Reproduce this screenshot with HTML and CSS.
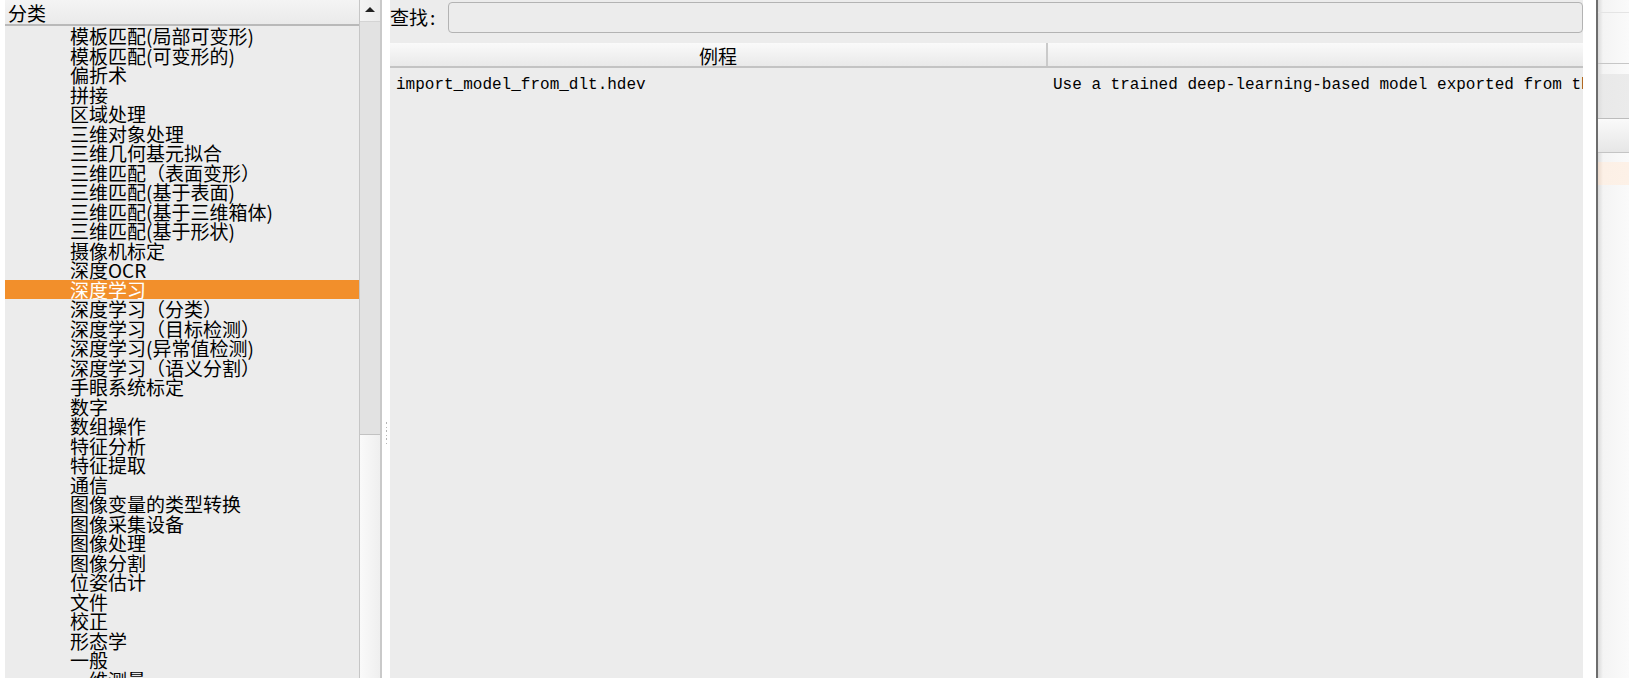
FILE: index.html
```html
<!DOCTYPE html>
<html lang="zh-CN">
<head>
<meta charset="utf-8">
<title>例程浏览器</title>
<link rel="stylesheet" href="styles.css">
</head>
<body>
<div class="app">
  <div class="left-pane">
    <div class="cat-header">分类</div>
    <ul class="cat-list">
      <li>模板匹配(局部可变形)</li>
      <li>模板匹配(可变形的)</li>
      <li>偏折术</li>
      <li>拼接</li>
      <li>区域处理</li>
      <li>三维对象处理</li>
      <li>三维几何基元拟合</li>
      <li>三维匹配（表面变形）</li>
      <li>三维匹配(基于表面)</li>
      <li>三维匹配(基于三维箱体)</li>
      <li>三维匹配(基于形状)</li>
      <li>摄像机标定</li>
      <li>深度OCR</li>
      <li class="selected">深度学习</li>
      <li>深度学习（分类）</li>
      <li>深度学习（目标检测）</li>
      <li>深度学习(异常值检测)</li>
      <li>深度学习（语义分割）</li>
      <li>手眼系统标定</li>
      <li>数字</li>
      <li>数组操作</li>
      <li>特征分析</li>
      <li>特征提取</li>
      <li>通信</li>
      <li>图像变量的类型转换</li>
      <li>图像采集设备</li>
      <li>图像处理</li>
      <li>图像分割</li>
      <li>位姿估计</li>
      <li>文件</li>
      <li>校正</li>
      <li>形态学</li>
      <li>一般</li>
      <li>一维测量</li>
      <li>颜色处理</li>
    </ul>
  </div>
  <div class="scrollbar">
    <div class="sb-up"><span class="sb-arrow"></span></div>
    <div class="sb-thumb"></div>
    <div class="sb-track"></div>
  </div>
  <div class="splitter">
    <div class="grip">
      <span class="dot big"></span>
      <span class="dot"></span>
      <span class="dot big"></span>
      <span class="dot"></span>
      <span class="dot big"></span>
      <span class="dot"></span>
    </div>
  </div>
  <div class="right-pane">
    <div class="search-row">
      <label class="search-label">查找<span class="colon">:</span></label>
      <div class="search-input"></div>
    </div>
    <div class="table">
      <div class="thead">
        <div class="th col1">例程</div>
        <div class="th col2"></div>
      </div>
      <div class="trow">
        <div class="td col1">import_model_from_dlt.hdev</div>
        <div class="td col2">Use a trained deep-learning-based model exported from the Deep Learning Tool.</div>
      </div>
    </div>
  </div>
  <div class="gap"></div>
  <div class="back-window">
    <div class="bw-top"></div>
    <div class="bw-a"></div>
    <div class="bw-band"></div>
    <div class="bw-b"></div>
    <div class="bw-grad"></div>
    <div class="bw-c"></div>
    <div class="bw-orange"></div>
    <div class="bw-rest"></div>
  </div>
</div>
</body>
</html>
```
FILE: styles.css
```css
html, body {
  margin: 0;
  padding: 0;
  background: #ffffff;
  overflow: hidden;
}

.app {
  display: flex;
  height: 678px;
  width: 1629px;
  font-family: "Noto Sans CJK SC", "Liberation Sans", sans-serif;
  color: #000;
}

.left-pane {
  margin-left: 5px;
  width: 354px;
  background: #ececec;
  display: flex;
  flex-direction: column;
  overflow: hidden;
}

.cat-header {
  height: 24px;
  line-height: 26px;
  padding-left: 3px;
  font-size: 19px;
  background: linear-gradient(#f4f4f4, #eaeaea);
  border-bottom: 2px solid #b9b9b9;
  flex: none;
}

.cat-list {
  list-style: none;
  margin: 0;
  padding: 0;
  flex: 1;
  overflow: hidden;
}

.cat-list li {
  height: 19.5px;
  line-height: 19.5px;
  font-size: 19px;
  padding-left: 65px;
  white-space: nowrap;
}

.cat-list li.selected {
  background: #f28f2b;
  color: #ffffff;
}

.scrollbar {
  width: 20px;
  border-left: 1px solid #c6c6c6;
  border-right: 2px solid #c9c9c9;
  display: flex;
  flex-direction: column;
  flex: none;
}

.sb-up {
  height: 21px;
  border-bottom: 1px solid #d4d4d4;
  background: linear-gradient(to right, #f4f4f4, #ececec);
  display: flex;
  align-items: center;
  justify-content: center;
}

.sb-arrow {
  width: 0;
  height: 0;
  border-left: 5px solid transparent;
  border-right: 5px solid transparent;
  border-bottom: 5px solid #222;
  margin-top: -2px;
}

.sb-thumb {
  height: 412px;
  background: #e2e2e2;
  border-bottom: 1px solid #c2c2c2;
}

.sb-track {
  flex: 1;
  background: linear-gradient(to right, #fafafa, #efefef);
}

.splitter {
  width: 8px;
  background: #ffffff;
  flex: none;
  display: flex;
  justify-content: center;
}

.grip {
  margin-top: 422px;
  display: flex;
  flex-direction: column;
  gap: 2.5px;
  align-items: center;
}

.dot {
  width: 1px;
  height: 1px;
  background: #b5b5b5;
}

.dot.big {
  height: 2px;
}

.right-pane {
  width: 1193px;
  background: #ececec;
  display: flex;
  flex-direction: column;
  flex: none;
  overflow: hidden;
}

.search-row {
  display: flex;
  align-items: center;
  height: 32px;
  margin-top: 1px;
  flex: none;
}

.search-label {
  width: 58px;
  font-size: 19px;
  line-height: 32px;
  flex: none;
}

.search-label .colon {
  margin-left: 2px;
}

.search-input {
  flex: 1;
  height: 29px;
  border: 1.5px solid #b3b3b3;
  border-radius: 4px;
  background: #ececec;
}

.table {
  margin-top: 10px;
  flex: 1;
  display: flex;
  flex-direction: column;
}

.thead {
  display: flex;
  height: 23px;
  border-bottom: 2px solid #c3c3c3;
  background: linear-gradient(#fafafa, #e9e9e9);
  flex: none;
}

.th {
  font-size: 19px;
  line-height: 25px;
  text-align: center;
  overflow: hidden;
}

.th.col1 {
  width: 656px;
  border-right: 2px solid #cacaca;
  flex: none;
}

.th.col2 {
  flex: 1;
}

.trow {
  display: flex;
  height: 28px;
  padding-top: 3px;
  align-items: center;
}

.td {
  font-family: "Liberation Mono", "DejaVu Sans Mono", monospace;
  font-size: 16px;
  white-space: nowrap;
  overflow: hidden;
  line-height: 28px;
}

.td.col1 {
  width: 652px;
  padding-left: 6px;
  flex: none;
}

.td.col2 {
  flex: 1;
  padding-left: 5px;
}

.gap {
  width: 13px;
  background: #ffffff;
  flex: none;
}

.back-window {
  flex: 1;
  border-left: 2px solid #6d6d6d;
  display: flex;
  flex-direction: column;
  background: linear-gradient(to right, #d9d9d9, #f4f4f4 5px, #fafafa);
}

.bw-top {
  height: 12px;
  border-bottom: 1px solid #e4e4e4;
}

.bw-a {
  height: 50px;
  border-bottom: 1px solid #c6c6c6;
}

.bw-band {
  height: 10px;
}

.bw-b {
  height: 32px;
  background: linear-gradient(to right, #dcdcdc, #e9e9e9 5px, #ebebeb);
  border-bottom: 12px solid transparent;
}

.bw-grad {
  height: 33px;
  border-top: 1px solid #bcbcbc;
  border-bottom: 1px solid #c4c4c4;
  background: linear-gradient(#fafafa, #e6e6e6);
}

.bw-c {
  height: 9px;
}

.bw-orange {
  height: 23px;
  background: linear-gradient(to right, #ead9cc, #fcf0e6 5px, #fdf1e7);
}

.bw-rest {
  flex: 1;
}
```
